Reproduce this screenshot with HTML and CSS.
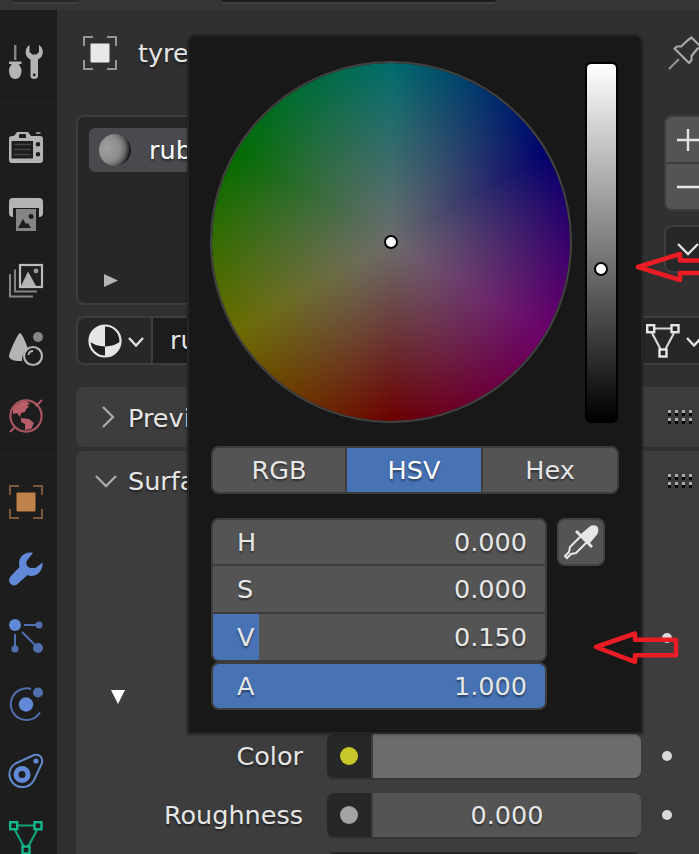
FILE: index.html
```html
<!DOCTYPE html>
<html lang="en">
<head>
<meta charset="utf-8">
<title>Material properties</title>
<link rel="stylesheet" href="styles.css">
</head>
<body>
<div class="topbar"><span class="stub stub-a"></span><span class="stub stub-b"></span></div>
<div class="workspace">
  <nav class="rail">
    <div class="group">
      <span class="tab"><svg viewBox="0 0 34 34"><g fill="#b4b4b4"><rect x="5" y="0" width="2.400" height="15" fill="#858585"/><path d="M0 16.500h12.500v2.500H10c0 1.500 2.500 3 2.500 6.500 0 5-2.500 8.500-6.200 8.500S0 30.500 0 25.500C0 22 2.500 20.500 2.500 19H0z"/><path fill-rule="evenodd" d="M20.500 0c-5.500 3.500-5 12 1 14.500V31c0 4 7.500 4 7.500 0V14.500c6-2.500 6.500-11 1-14.500v7l-2.500 2.500h-4L20.500 7zM25.200 28.500a1.400 1.400 0 1 1 0 2.800 1.400 1.400 0 0 1 0-2.800z"/></g></svg></span>
    </div>
    <div class="group">
      <span class="tab"><svg viewBox="0 0 34 34"><path fill="#b4b4b4" fill-rule="evenodd" d="M3 6h2l3-4h11l3 4h9q3 0 3 3v21q0 3-3 3H3q-3 0-3-3V9q0-3 3-3zM10 4.500v3.500h7V4.500l-1-.5h-5zM2.500 11v17.500H24V11zM29 12a2.300 2.300 0 1 0 0 4.600 2.300 2.300 0 0 0 0-4.600zM29 22a2.300 2.300 0 1 0 0 4.600 2.300 2.300 0 0 0 0-4.600z"/><path d="M27 3h4.500" stroke="#858585" stroke-width="2"/><path d="M5 14.500h17M5 19.500h17M5 24.500h17" stroke="#444" stroke-width="1.500"/></svg></span>
      <span class="tab"><svg viewBox="0 0 34 34"><path fill="#b4b4b4" d="M4 1h26q4 0 4 4v11q0 4-4 4V11H4v9q-4 0-4-4V5q0-4 4-4z"/><path fill="#858585" fill-rule="evenodd" d="M7 12h20v22H7zM9 31h13l-3-5-2 1-3-5zM22 17a2.500 2.500 0 1 0 .1 5 2.500 2.500 0 0 0-.1-5z"/></svg></span>
      <span class="tab"><svg viewBox="0 0 34 34"><path d="M1 10v22.500h23M6 5.500v22h22" fill="none" stroke="#858585" stroke-width="2"/><rect x="11" y="1" width="22" height="22" fill="#202020" stroke="#bbb" stroke-width="2.200"/><path d="M12 22 19 7.500l8 14.500z" fill="#b4b4b4"/><circle cx="27" cy="7" r="2.400" fill="#999"/></svg></span>
      <span class="tab"><svg viewBox="0 0 34 34"><path fill="#b4b4b4" d="M11 1c-2 0-10 18-11 23 0 4 7 5.500 13 5 0-5 1.500-9.500 6-12C17 11 13 1 11 1z"/><circle cx="29" cy="5" r="5" fill="#858585"/><circle cx="24" cy="24" r="9" fill="none" stroke="#b4b4b4" stroke-width="2.200"/><path d="M19.500 23q.5-4 4.500-4" fill="none" stroke="#b4b4b4" stroke-width="1.800"/></svg></span>
      <span class="tab"><svg viewBox="0 0 34 34"><circle cx="17" cy="17" r="15.600" fill="none" stroke="#a95661" stroke-width="2.200"/><path d="M1 33l5-5M28 6l5-5" stroke="#a95661" stroke-width="2.200"/><path fill="#b95e69" d="M4 10c3-4 8-8 13-8l4 3-3 1 2 2-3 2-1 3-4 1-1 4-3-4-4 1zM12 19l8 1 5 4-3 6-6 1v-6l-4-2zM26 3l3 3-2 2z"/></svg></span>
    </div>
    <div class="group">
      <span class="tab"><svg viewBox="0 0 34 34"><path d="M1 10V1h9M24 1h9v9M33 24v9h-9M10 33H1v-9" fill="none" stroke="#7f5838" stroke-width="2"/><rect x="7.500" y="7.500" width="19" height="19" rx="1" fill="#c08249"/></svg></span>
      <span class="tab"><svg viewBox="0 0 34 34"><path fill="#6189d8" d="M24 .8C15-1 8 6 10.500 15L1.500 24.500C-3 29.500 4 36.500 8.500 32L18.500 23C27 26.500 34.500 19 33.500 10.500L26.500 16H22C17.500 15 16.500 12 18 8.500z"/></svg></span>
      <span class="tab"><svg viewBox="0 0 34 34"><path d="M15 6h15M6 15v15M13 13l16 16" stroke="#506fae" stroke-width="2"/><circle cx="6" cy="6" r="6" fill="#6189d8"/><g fill="#506fae"><circle cx="30" cy="6" r="3.600"/><circle cx="6" cy="30" r="3.600"/><circle cx="29" cy="29" r="5"/></g></svg></span>
      <span class="tab"><svg viewBox="0 0 34 34"><path d="M22 2A15.800 15.800 0 1 0 31 25.500" fill="none" stroke="#506fae" stroke-width="2"/><circle cx="17" cy="17.500" r="7.200" fill="#6189d8"/><circle cx="29" cy="5.500" r="5" fill="#506fae"/></svg></span>
      <span class="tab"><svg viewBox="0 0 34 34"><path d="M6.500 9.500 24 1.500C30-1 35 4 32.500 10L25 26C21 34 10 35.500 4 29S0 13.500 6.500 9.500z" fill="none" stroke="#6189c8" stroke-width="2"/><circle cx="13" cy="20.500" r="6" fill="none" stroke="#6189d8" stroke-width="5"/><circle cx="27" cy="7" r="2.600" fill="#6189d8"/></svg></span>
      <span class="tab"><svg viewBox="0 0 34 34"><path d="M9 4.500h16M6 9l9 17M28 9l-9 17" stroke="#10a37a" stroke-width="2.200"/><g fill="none" stroke="#12b88a" stroke-width="2.400"><rect x="1.200" y="1.200" width="7" height="7"/><rect x="25.500" y="1.200" width="7" height="7"/><rect x="13.500" y="25.500" width="7" height="7"/></g></svg></span>
    </div>
  </nav>

  <main class="props">
    <header class="crumb">
      <svg class="i34" viewBox="0 0 34 34"><path d="M1 10V1h9M24 1h9v9M33 24v9h-9M10 33H1v-9" fill="none" stroke="#979797" stroke-width="2"/><rect x="7.500" y="7.500" width="19" height="19" rx="1" fill="#e8e8e8"/></svg>
      <span class="name">tyre</span>
      <svg class="pin" viewBox="0 0 34 34"><path d="M23.500 1.500 33 11l-2.500 1.500-1 0-6 7.500v4L21 27 6.500 12.500 9 10.500h4l7-6.500z" fill="none" stroke="#a8a8a8" stroke-width="2.200" stroke-linejoin="round"/><path d="M11 23 1 33" stroke="#929292" stroke-width="2.200"/></svg>
    </header>
    <section class="slots">
      <div class="slotlist">
        <div class="slot"><span class="ball"></span><span>rub</span></div>
        <svg class="play" viewBox="0 0 14 13"><path d="M0 0l14 6.500L0 13z" fill="#b4b4b4"/></svg>
      </div>
      <div class="slotbtns">
        <div class="pair">
          <span class="sq"><svg viewBox="0 0 22 22"><path d="M11 0v22M0 11h22" stroke="#e6e6e6" stroke-width="2.400"/></svg></span>
          <span class="sq"><svg viewBox="0 0 22 22"><path d="M0 11h22" stroke="#e6e6e6" stroke-width="2.600"/></svg></span>
        </div>
        <span class="more"><svg viewBox="0 0 22 12"><path d="M1 1l10 10L21 1" fill="none" stroke="#e0e0e0" stroke-width="2.400"/></svg></span>
      </div>
    </section>
    <section class="datablock">
      <span class="browse">
        <svg class="i34" viewBox="0 0 34 34"><circle cx="17" cy="17" r="15.500" fill="#202020" stroke="#e6e6e6" stroke-width="2.200"/><path fill="#e6e6e6" d="M17 1v21.500Q7 22 1 17A16 16 0 0 1 17 1zM17 22.500Q27 22 33 17A16 16 0 0 1 17 33z"/></svg>
        <svg class="chev" viewBox="0 0 16 10"><path d="M1 1l7 7.500L15 1" fill="none" stroke="#e0e0e0" stroke-width="2.400"/></svg>
      </span>
      <span class="dbname">ru</span>
      <span class="link">
        <svg class="i34" viewBox="0 0 34 34"><path d="M9 4.500h16M6 9l9 17M28 9l-9 17" stroke="#d6d6d6" stroke-width="2.200"/><g fill="none" stroke="#e6e6e6" stroke-width="2.400"><rect x="1.200" y="1.200" width="7" height="7"/><rect x="25.500" y="1.200" width="7" height="7"/><rect x="13.500" y="25.500" width="7" height="7"/></g></svg>
        <svg class="chev" viewBox="0 0 16 10"><path d="M1 1l7 7.500L15 1" fill="none" stroke="#e0e0e0" stroke-width="2.400"/></svg>
      </span>
    </section>
    <section class="panel preview">
      <div class="phead"><svg class="arr" viewBox="0 0 22 22"><path d="M8 1l10 10L8 21" fill="none" stroke="#aaa" stroke-width="2.300"/></svg><span>Previ</span><i class="grip"><b></b><b></b></i></div>
    </section>
    <section class="panel surface">
      <div class="phead"><svg class="arr" viewBox="0 0 22 22"><path d="M1 6l10 10L21 6" fill="none" stroke="#aaa" stroke-width="2.300"/></svg><span>Surfa</span><i class="grip"><b></b><b></b></i></div>
      <div class="rows">
        <div class="row"><span></span><span></span><i class="dot"></i></div>
        <div class="row"><svg class="fold" viewBox="0 0 14 14"><path d="M0 0h14L7 14z" fill="#fff"/></svg></div>
        <div class="row"><span class="label">Color</span><span class="input"><i class="sock yellow"></i><span class="field swatch"></span></span><i class="dot"></i></div>
        <div class="row"><span class="label">Roughness</span><span class="input"><i class="sock gray"></i><span class="field">0.000</span></span><i class="dot"></i></div>
        <div class="row"><span></span><span class="input dark"></span></div>
      </div>
    </section>
  </main>
</div>

<div class="picker">
  <div class="pickrow">
    <div class="wheel"><i class="knob"></i></div>
    <div class="value"><i class="knob low"></i></div>
  </div>
  <div class="modes"><span>RGB</span><span class="on">HSV</span><span>Hex</span></div>
  <div class="sliders">
    <div class="stack">
      <div class="hsv">
        <div class="num"><span>H</span><span>0.000</span></div>
        <div class="num"><span>S</span><span>0.000</span></div>
        <div class="num v"><span>V</span><span>0.150</span></div>
      </div>
      <div class="num alpha"><span>A</span><span>1.000</span></div>
    </div>
    <span class="dropper"><svg viewBox="0 0 34 34"><path fill="#e6e6e6" d="M18 8l6-5c4-4 9-3 10 0s0 6-3 9l-5 6 3 3-2 2L11 7l2-2 4 4z"/><path d="M17 11 6 22l-1 5-4 4 2 2 4-4 5-1 11-11" fill="none" stroke="#e6e6e6" stroke-width="2"/></svg></span>
  </div>
</div>

<svg class="mark mark-top" viewBox="0 0 66 34"><path d="M3 17 45 4v6.500h30v12.500H45v7z" fill="none" stroke="#ec1c24" stroke-width="4.500" stroke-linejoin="round"/></svg>
<svg class="mark mark-low" viewBox="0 0 88 36"><path d="M4 17 43 3.500v6.300h41v15.500H43v6.500z" fill="none" stroke="#ec1c24" stroke-width="4.500" stroke-linejoin="round"/></svg>
</body>
</html>
```
FILE: styles.css
```css
* { box-sizing: border-box; }
body {
  margin: 0;
  width: 699px;
  height: 854px;
  overflow: hidden;
  position: relative;
  background: #303030;
  color: #e6e6e6;
  font: 25.500px/30px "DejaVu Sans", sans-serif;
  text-shadow: 0 2px 2px rgba(0, 0, 0, .45);
}
svg { display: block; overflow: visible; flex: none; }
i { font-style: normal; display: block; }
.i34 { width: 34px; height: 34px; }

.topbar { height: 10px; background: #353535; display: flex; gap: 142px; padding-left: 12px; }
.stub { height: 4px; width: 68px; background: #282828; border-bottom: 2px solid #404040; border-radius: 0 0 6px 6px; }
.stub-b { width: 274px; background: #1d1d1d; }

.workspace { display: flex; height: 844px; }
.rail { width: 57px; flex: none; background: #1a1a1a; overflow: hidden; }
.group { background: #1d1d1d; border-bottom: 1px solid #171717; padding: 16.500px 0 0; }
.group:first-child { padding: 18.500px 0 1.500px; height: 87px; }
.group:last-child { padding-top: 18px; }
.tab { display: flex; align-items: center; height: 67.200px; padding-left: 8.500px; }
.tab svg { width: 34px; height: 34px; }

.props { flex: 1; min-width: 0; padding-left: 19px; overflow: hidden; }
.crumb { height: 86px; display: flex; align-items: center; padding-left: 7px; margin-bottom: 19px; }
.name { margin-left: 21px; flex: none; width: 530px; }
.pin { width: 34px; height: 34px; }

.slots { display: flex; gap: 22px; height: 190px; margin-bottom: 11px; }
.slotlist { width: 566px; flex: none; border: 2px solid #3d3d3d; border-radius: 8px; background: #272727; padding: 11px; }
.slot { height: 44px; border-radius: 6px; background: #49494e; display: flex; align-items: center; gap: 18px; padding-left: 10px; color: #fff; }
.ball { width: 32px; height: 32px; border-radius: 50%; background: radial-gradient(circle at 25% 45%, #a0a0a0 0, #8c8c8c 45%, #666 62%, #111 80%); }
.play { width: 14px; height: 13px; margin: 102px 0 0 15px; }
.slotbtns { flex: none; width: 48px; }
.pair { border: 2px solid #3d3d3d; border-radius: 8px; background: #3d3d3d; display: grid; gap: 2px; overflow: hidden; height: 96px; }
.sq { background: #545454; display: grid; place-items: center; }
.sq svg { width: 22px; height: 22px; }
.more { margin-top: 14px; height: 48px; border: 2px solid #3d3d3d; border-radius: 8px; background: #272727; display: grid; place-items: center; }
.more svg { width: 22px; height: 12px; }

.datablock { width: 640px; height: 49px; border: 2px solid #3d3d3d; border-radius: 8px; background: #272727; display: flex; overflow: hidden; margin-bottom: 22px; }
.browse { width: 75px; flex: none; border-right: 2px solid #3d3d3d; display: flex; align-items: center; gap: 6px; padding-left: 10px; }
.chev { width: 16px; height: 10px; margin-top: 3px; }
.dbname { width: 476px; flex: none; background: #1d1d1d; padding: 7px 0 0 17px; }
.link { display: flex; align-items: center; gap: 6px; padding-left: 17px; }

.panel { width: 640px; background: #3d3d3d; border-radius: 8px; }
.preview { height: 60px; margin-bottom: 3.500px; }
.surface { height: 430px; }
.phead { height: 60px; display: flex; align-items: center; padding-left: 18px; }
.phead .arr { width: 24px; height: 22px; margin-right: 10px; }
.phead span { width: 540px; flex: none; padding-top: 1px; }
.grip { display: grid; gap: 2px; }
.grip b { width: 26px; height: 6px; background: repeating-linear-gradient(90deg, transparent 0 3px, #3d3d3d 3px 7px), linear-gradient(#aaa 0 50%, #050505 50%); }
.rows { padding-top: 105px; display: grid; gap: 15px; }
.row { height: 44px; display: grid; grid-template-columns: 227px 314px 10px; column-gap: 24px; align-items: center; }
.row > .dot { margin-left: -3px; }
.label { text-align: right; white-space: nowrap; }
.input { display: flex; gap: 2px; height: 44px; border-radius: 7px; overflow: hidden; box-shadow: 0 2px 0 #353535; }
.input.dark { background: #272727; }
.sock { width: 44px; background: #272727; display: grid; place-items: center; }
.sock::before { content: ""; width: 18px; height: 18px; border-radius: 50%; background: #a3a3a3; }
.sock.yellow::before { background: #c7c729; }
.field { flex: 1; background: #545454; text-align: center; line-height: 44px; }
.swatch { background: #6c6c6c; }
.dot { width: 10px; height: 10px; border-radius: 50%; background: #dadada; }
.fold { width: 14px; height: 14px; margin-left: 35px; }

.picker { position: absolute; left: 187px; top: 34px; width: 456px; height: 700px; background: #181818; border: 2px solid #252525; border-radius: 9px 9px 2px 2px; padding: 25px 22px 0; box-shadow: 0 1px 3px rgba(0, 0, 0, .3); }
.pickrow { display: flex; gap: 13px; height: 362px; margin-left: -1px; }
.wheel { width: 362px; height: 362px; border-radius: 50%; border: 2px solid #424242; display: grid; place-items: center;
  background: radial-gradient(circle closest-side, #6c6c6c, rgba(108, 108, 108, 0)) padding-box,
    conic-gradient(#006c6c, #00006c 60deg, #6c006c 120deg, #6c0000 180deg, #6c6c00 240deg, #006c00 300deg, #006c6c) padding-box; }
.value { width: 33px; height: 361px; margin-top: 1px; border: 2px solid #000; border-radius: 6px; background: linear-gradient(#fff, #000) padding-box; }
.knob { width: 14px; height: 14px; border: 2px solid #000; border-radius: 50%; background: #fff; }
.low { margin: 198px 0 0 7px; }
.modes { margin-top: 23px; height: 48px; border: 2px solid #3d3d3d; border-radius: 8px; background: #3d3d3d; display: grid; grid-template-columns: 132px 134px 1fr; gap: 2px; overflow: hidden; text-align: center; line-height: 45px; }
.modes span { background: #545454; }
.modes .on { background: #4772b3; color: #fff; }
.sliders { margin-top: 24px; display: flex; gap: 10px; }
.stack { width: 336px; }
.hsv { border: 2px solid #3d3d3d; border-radius: 8px; overflow: hidden; background: #3d3d3d; display: grid; gap: 2px; grid-template-rows: 44px 46px 46px; }
.num { background: #545454; display: flex; align-items: center; justify-content: space-between; padding: 0 18px 0 24px; }
.num.v { background: linear-gradient(90deg, #4772b3 46px, #545454 46px); }
.alpha { height: 48px; border: 2px solid #3d3d3d; border-radius: 8px; background: #4772b3; padding: 0 18px 0 22px; }
.alpha { padding-left: 24px; }
.dropper { width: 48px; height: 48px; border: 2px solid #424242; border-radius: 8px; background: #545454; display: grid; place-items: center; }
.dropper svg { width: 34px; height: 34px; }

.mark { position: absolute; }
.mark-top { left: 635px; top: 250px; width: 66px; height: 34px; }
.mark-low { left: 592px; top: 630px; width: 88px; height: 36px; }
```
